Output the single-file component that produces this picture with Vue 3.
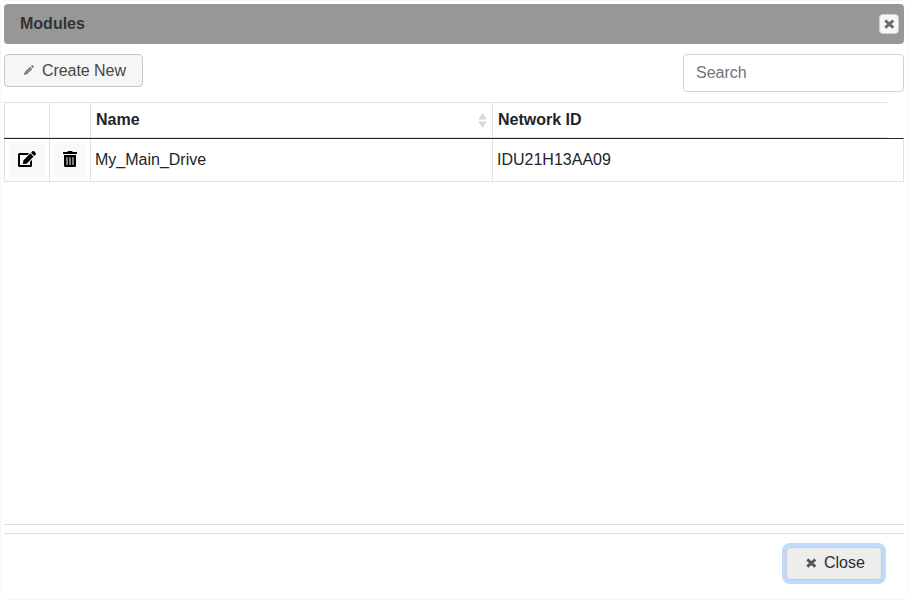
<script setup>
import { ref, computed } from 'vue'

const search = ref('')
const modules = ref([
  { name: 'My_Main_Drive', networkId: 'IDU21H13AA09' },
])

const filtered = computed(() => {
  const q = search.value.toLowerCase()
  return modules.value.filter(m =>
    m.name.toLowerCase().includes(q) || m.networkId.toLowerCase().includes(q))
})
</script>

<template>
  <div class="dialog">
    <div class="titlebar">
      <span class="title">Modules</span>
      <button class="titlebar-close" type="button" aria-label="Close dialog">
        <svg class="icon-x" viewBox="0 0 12 12">
          <path d="M2.3 2.5 L10.3 9.7 M10.3 2.5 L2.3 9.7" />
        </svg>
      </button>
    </div>

    <div class="toolbar">
      <button class="btn btn-create" type="button">
        <svg class="icon-pencil" viewBox="0 0 10 10">
          <path class="pencil-body" d="M0.1 9.9 L0.9 7 L6.1 1.8 L8.2 3.9 L3 9.1 Z" />
          <path class="pencil-lead" d="M2.1 7.9 L6.9 3.1" />
          <path class="pencil-tip" d="M7 1.2 L8.2 0 L10 1.8 L8.8 3 Z" />
        </svg>
        <span class="create-label">Create New</span>
      </button>
      <input v-model="search" class="search" type="text" placeholder="Search">
    </div>

    <div class="table">
      <div class="row head">
        <div class="cell"></div>
        <div class="cell"></div>
        <div class="cell sortable">
          <span>Name</span>
          <svg class="icon-sort" viewBox="0 0 9 15">
            <path d="M4.5 0 L8.8 6.5 H0.2 Z M0.2 8.5 H8.8 L4.5 15 Z" />
          </svg>
        </div>
        <div class="cell">Network ID</div>
      </div>
      <div v-for="m in filtered" :key="m.networkId" class="row body">
        <div class="cell action">
          <button class="btn-light" type="button" aria-label="Edit">
            <svg class="icon-edit" viewBox="0 0 576 512">
              <path d="M402.6 83.2l90.2 90.2c3.8 3.8 3.8 10 0 13.8L274.4 405.6l-92.8 10.3c-12.4 1.4-22.9-9.1-21.5-21.5l10.3-92.8L388.8 83.2c3.8-3.8 10-3.8 13.8 0zm162-22.9l-48.8-48.8c-15.2-15.2-39.9-15.2-55.2 0l-35.4 35.4c-3.8 3.8-3.8 10 0 13.8l90.2 90.2c3.8 3.8 10 3.8 13.8 0l35.4-35.4c15.2-15.3 15.2-40 0-55.2zM384 346.2V448H64V128h229.8c3.2 0 6.2-1.3 8.5-3.5l40-40c7.6-7.6 2.2-20.5-8.5-20.5H48C21.5 64 0 85.5 0 112v352c0 26.5 21.5 48 48 48h352c26.5 0 48-21.5 48-48V306.2c0-10.7-12.9-16-20.5-8.5l-40 40c-2.2 2.3-3.5 5.3-3.5 8.5z" />
            </svg>
          </button>
        </div>
        <div class="cell action">
          <button class="btn-light" type="button" aria-label="Delete">
            <svg class="icon-trash" viewBox="0 0 448 512">
              <path d="M32 464a48 48 0 0 0 48 48h288a48 48 0 0 0 48-48V128H32zm272-256a16 16 0 0 1 32 0v224a16 16 0 0 1-32 0zm-96 0a16 16 0 0 1 32 0v224a16 16 0 0 1-32 0zm-96 0a16 16 0 0 1 32 0v224a16 16 0 0 1-32 0zM432 32H312l-9.4-18.7A24 24 0 0 0 281.1 0H166.800a23.720 23.720 0 0 0-21.4 13.300L136 32H16A16 16 0 0 0 0 48v32a16 16 0 0 0 16 16h416a16 16 0 0 0 16-16V48a16 16 0 0 0-16-16z" />
            </svg>
          </button>
        </div>
        <div class="cell">{{ m.name }}</div>
        <div class="cell">{{ m.networkId }}</div>
      </div>
    </div>

    <div class="buttonpane">
      <button class="btn btn-close" type="button">
        <svg class="icon-x" viewBox="0 0 12 12">
          <path d="M2.3 2.5 L10.3 9.7 M10.3 2.5 L2.3 9.7" />
        </svg>
        <span>Close</span>
      </button>
    </div>
  </div>
</template>

<style>
body {
  margin: 0;
  background: #fff;
}
</style>

<style scoped>
.dialog {
  box-sizing: border-box;
  display: flex;
  flex-direction: column;
  width: 908px;
  height: 600px;
  padding: 3px;
  border: 1px solid #f8f8f8;
  border-radius: 4px;
  background: #fff;
  color: #212529;
  font-family: "Liberation Sans", Arial, sans-serif;
  font-size: 16px;
  line-height: 24px;
}

.dialog * {
  box-sizing: border-box;
}

button,
input {
  margin: 0;
  font: inherit;
}

.titlebar {
  display: flex;
  align-items: center;
  justify-content: space-between;
  height: 40px;
  padding: 0 5px 0 16px;
  border-radius: 4px;
  background: #979797;
}

.title {
  color: #333;
  font-weight: bold;
  line-height: 40px;
  height: 40px;
}

.titlebar-close {
  display: flex;
  align-items: center;
  justify-content: center;
  width: 20px;
  height: 20px;
  padding: 0;
  border: 1px solid #d0d0d0;
  border-radius: 4px;
  background: #f6f6f6;
}

.icon-x {
  width: 12px;
  height: 12px;
  fill: none;
  stroke: #555;
  stroke-width: 3;
}

.titlebar-close .icon-x {
  stroke: #6b6b6b;
}

.toolbar {
  display: flex;
  align-items: flex-start;
  justify-content: space-between;
  height: 48px;
  padding-top: 10px;
}

.btn {
  display: flex;
  align-items: center;
  height: 33px;
  border: 1px solid #c5c5c5;
  border-radius: 4px;
  background: #f6f6f6;
  color: #454545;
  line-height: 31px;
}

.btn-create {
  width: 139px;
  padding: 0 0 0 19px;
  gap: 8px;
}

.create-label {
  letter-spacing: -0.06px;
}

.icon-pencil {
  width: 10px;
  height: 10px;
  margin-bottom: 1px;
}

.pencil-body,
.pencil-tip {
  fill: #666;
}

.pencil-lead {
  stroke: #d0d0d0;
  stroke-width: 0.7;
}

.search {
  width: 221px;
  height: 38px;
  padding: 0 12px;
  border: 1px solid #ced4da;
  border-radius: 4px;
  background: #fff;
  color: #495057;
  outline: none;
}

.search::placeholder {
  color: #6c757d;
  opacity: 1;
}

.table {
  display: flex;
  flex-direction: column;
  height: 423px;
  margin-top: 10px;
  border-bottom: 1px solid #ddd;
}

.row {
  display: grid;
  grid-template-columns: 45px 41px 402px 1fr;
}

.head {
  width: 883px;
  height: 36px;
  border-top: 1px solid #dee2e6;
  border-bottom: 1px solid #dee2e6;
  font-weight: bold;
}

.cell {
  padding: 4px;
  border-left: 1px solid #dee2e6;
}

.head .cell {
  padding: 5px 5px 4px;
}

.sortable {
  display: flex;
  justify-content: space-between;
}

.icon-sort {
  width: 9px;
  height: 15px;
  margin-top: 5px;
  fill: #d8d8d8;
}

.body {
  height: 44px;
  border: 1px solid #dee2e6;
  border-top-color: #212529;
  border-left: 0;
}

.body .cell {
  padding-top: 9px;
}

.body .action {
  padding: 4px;
}

.btn-light {
  display: flex;
  align-items: center;
  justify-content: center;
  width: 100%;
  height: 34px;
  padding: 0 0 2px;
  border: 0;
  border-radius: 4px;
  background: #f8f9fa;
}

.icon-edit {
  width: 18px;
  height: 16px;
}

.icon-trash {
  width: 14px;
  height: 16px;
}

.buttonpane {
  display: flex;
  justify-content: flex-end;
  margin-top: 8px;
  padding: 13px 22px 0 0;
  border-top: 1px solid #ddd;
}

.btn-close {
  width: 96px;
  padding: 0 0 2px 18px;
  gap: 7px;
  border-color: #ccc;
  background: #ededed;
  color: #2b2b2b;
  box-shadow: 0 0 0 4px #c1d9fe;
}
</style>
